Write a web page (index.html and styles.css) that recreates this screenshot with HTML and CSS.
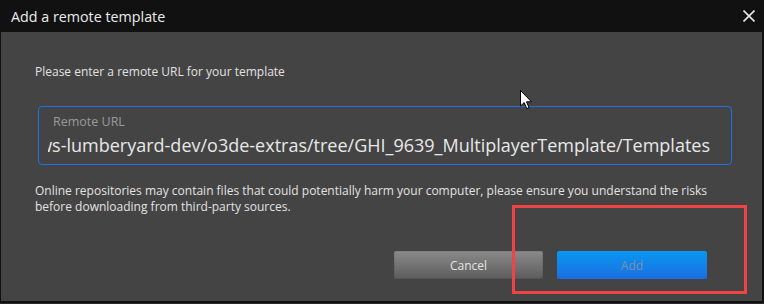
FILE: index.html
```html
<!DOCTYPE html>
<html lang="en">
<head>
    <meta charset="UTF-8">
    <meta name="viewport" content="width=device-width, initial-scale=1.0">
    <title>Add a remote template</title>
    <link rel="stylesheet" href="styles.css">
</head>
<body>
    <div class="dialog">
        <div class="titlebar">
            <span class="title">Add a remote template</span>
            <button class="close-btn" aria-label="Close">
                <svg width="12" height="12" viewBox="0 0 12 12">
                    <path d="M0.5 0.5 L11.5 11.5 M11.5 0.5 L0.5 11.5" stroke="#e6e6e6" stroke-width="1.6" fill="none"/>
                </svg>
            </button>
        </div>
        <div class="content">
            <p class="prompt">Please enter a remote URL for your template</p>
            <div class="url-field">
                <label class="url-label" for="urlInput">Remote URL</label>
                <div class="url-value">
                    <span id="urlInput">https://github.com/aws-lumberyard-dev/o3de-extras/tree/GHI_9639_MultiplayerTemplate/Templates</span>
                </div>
            </div>
            <p class="warning">Online repositories may contain files that could potentially harm your computer, please ensure you understand the risks before downloading from third-party sources.</p>
            <div class="button-row">
                <button class="btn btn-cancel">Cancel</button>
                <button class="btn btn-add" disabled>Add</button>
            </div>
        </div>
    </div>

    <!-- annotation + pointer drawn over the dialog -->
    <div class="highlight"></div>
    <svg class="cursor" width="13" height="20" viewBox="0 0 13 20">
        <path d="M0.5 0.5 L0.5 16 L4.2 12.6 L6.8 18.6 L9 17.6 L6.5 11.8 L11.5 11.8 Z" fill="#ffffff" stroke="#000000" stroke-width="1"/>
    </svg>
</body>
</html>
```

FILE: styles.css
```css
* { box-sizing: border-box; }
body {
    margin: 0;
    padding: 0;
    background: #2b2b2b;
    font-family: 'Open Sans', 'Noto Sans', sans-serif;
    color: #e0e0e0;
    width: 764px;
    height: 304px;
    overflow: hidden;
    position: relative;
}
.dialog {
    width: 764px;
    background: #111111;
    padding: 0 2px 2px 1px;
}
.titlebar {
    height: 32px;
    display: flex;
    align-items: center;
    justify-content: space-between;
    padding: 0 9px 0 10px;
    margin-right: -2px;
    margin-left: -1px;
}
.title {
    font-size: 14.3px;
    color: #ececec;
    padding-left: 1px;
}
.close-btn {
    background: none;
    border: none;
    padding: 0;
    width: 12px;
    height: 12px;
    display: flex;
    cursor: pointer;
}
.content {
    background: #444444;
    height: 269px;
    padding: 32px 55px 0 34px;
}
.prompt {
    margin: 0;
    font-size: 12px;
    line-height: 16px;
    color: #e2e2e2;
}
.url-field {
    margin: 26px 0 0 3px;
    width: 694px;
    height: 59px;
    border: 1px solid #1f6fe6;
    border-radius: 4px;
    padding: 7px 21px 0 14px;
}
.url-label {
    display: block;
    font-size: 12.5px;
    line-height: 16px;
    color: #9a9a9a;
}
.url-value {
    margin: 3px 0 0 -5px;
    display: flex;
    justify-content: flex-end;
    overflow: hidden;
    white-space: nowrap;
    font-size: 18px;
    line-height: 24px;
    color: #e8e8e8;
}
.warning {
    margin: 18px 0 0;
    font-size: 12px;
    line-height: 16px;
    color: #e2e2e2;
}
.button-row {
    margin-top: 36px;
    display: flex;
    justify-content: flex-end;
    gap: 14px;
}
.btn {
    width: 150px;
    height: 28px;
    border: none;
    border-radius: 2px;
    font-family: inherit;
    font-size: 12px;
    padding: 0;
    cursor: pointer;
}
.btn-cancel {
    width: 149px;
    background: linear-gradient(#8a8a8a, #5c5c5c);
    color: #e4e4e4;
    box-shadow: inset 0 0 0 1px rgba(0, 0, 0, 0.08);
}
.btn-add {
    background: linear-gradient(#0898f1, #1c6ee0);
    color: #7a90ad;
    cursor: default;
}
.highlight {
    position: absolute;
    left: 512px;
    top: 205px;
    width: 235px;
    height: 89px;
    border: 3px solid #f04444;
}
.cursor {
    position: absolute;
    left: 520px;
    top: 90px;
}
```
